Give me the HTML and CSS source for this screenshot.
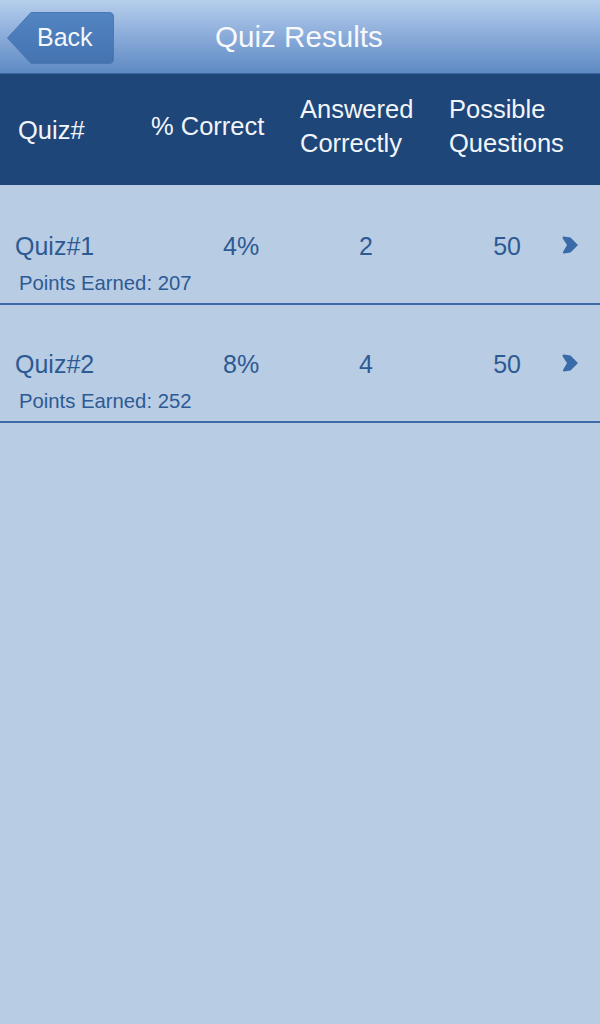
FILE: index.html
```html
<!DOCTYPE html>
<html>
<head>
<meta charset="utf-8">
<link rel="stylesheet" href="styles.css">
</head>
<body>
<div class="app">
  <div class="topbar">
    <div class="back">
      <svg class="back-shape" width="107" height="52" viewBox="0 0 107 52">
        <defs>
          <linearGradient id="bg" x1="0" y1="0" x2="0" y2="1">
            <stop offset="0" stop-color="#5285c2"/>
            <stop offset="1" stop-color="#4473b0"/>
          </linearGradient>
        </defs>
        <path d="M24 0.5 H102 Q106.5 0.5 106.5 5 V47 Q106.5 51.5 102 51.5 H24 L0.5 26 Z" fill="url(#bg)" stroke="#4a78b3" stroke-width="1"/>
      </svg>
      <span class="back-label">Back</span>
    </div>
    <div class="title">Quiz Results</div>
  </div>
  <div class="colhead">
    <div class="h h1">Quiz#</div>
    <div class="h h2">% Correct</div>
    <div class="h h3">Answered<br>Correctly</div>
    <div class="h h4">Possible<br>Questions</div>
  </div>
  <div class="row first">
    <div class="cells">
      <div class="c c1">Quiz#1</div>
      <div class="c c2">4%</div>
      <div class="c c3">2</div>
      <div class="c c4">50</div>
      <svg class="chev" width="17" height="18" viewBox="0 0 17 18"><path d="M0.5 1.5 Q0.5 0.5 2 0.5 L8.5 1.5 L16 9 L8.5 16.5 L2 17.5 Q0.5 17.5 1 16 L5 9 L1 3 Z" fill="#3b6aa8"/></svg>
    </div>
    <div class="pts">Points Earned: 207</div>
  </div>
  <div class="row">
    <div class="cells">
      <div class="c c1">Quiz#2</div>
      <div class="c c2">8%</div>
      <div class="c c3">4</div>
      <div class="c c4">50</div>
      <svg class="chev" width="17" height="18" viewBox="0 0 17 18"><path d="M0.5 1.5 Q0.5 0.5 2 0.5 L8.5 1.5 L16 9 L8.5 16.5 L2 17.5 Q0.5 17.5 1 16 L5 9 L1 3 Z" fill="#3b6aa8"/></svg>
    </div>
    <div class="pts">Points Earned: 252</div>
  </div>
</div>
</body>
</html>
```

FILE: styles.css
```css
html, body {
  margin: 0;
  padding: 0;
}
body {
  background: #b8cce4;
  font-family: "Liberation Sans", Arial, sans-serif;
  width: 600px;
  height: 1024px;
  overflow: hidden;
}
.app {
  display: flex;
  flex-direction: column;
}
.topbar {
  height: 73px;
  background: linear-gradient(to bottom, #b6cfec 0%, #8eaedb 45%, #5d8ac3 100%);
  display: flex;
  align-items: center;
  position: relative;
}
.back {
  position: relative;
  margin-left: 7px;
  margin-top: 2px;
  width: 107px;
  height: 52px;
  display: flex;
  align-items: center;
}
.back-shape {
  position: absolute;
  left: 0;
  top: 0;
}
.back-label {
  position: relative;
  margin-left: 30px;
  color: #f4f7fb;
  font-size: 25px;
}
.title {
  margin-left: 101px;
  color: #f7f9fc;
  font-size: 29.6px;
}
.colhead {
  height: 112px;
  background: #1f4679;
  border-top: 1px solid #3a65a0;
  display: flex;
  align-items: center;
  color: #f2f5fa;
  font-size: 25.5px;
  line-height: 34px;
  box-sizing: border-box;
}
.h1 { margin-left: 18px; width: 133px; }
.h2 { width: 149px; margin-bottom: 8px; }
.h3 { width: 149px; margin-bottom: 8px; }
.h4 { margin-bottom: 8px; }
.row {
  border-bottom: 2px solid #3d69a6;
  color: #2d5a93;
  display: flex;
  flex-direction: column;
  justify-content: flex-end;
  padding-bottom: 9px;
  box-sizing: content-box;
  height: 107px;
}
.row.first {
  margin-top: 2px;
}
.cells {
  display: flex;
  align-items: center;
  font-size: 25px;
  height: 30px;
}
.c1 { margin-left: 15px; width: 208px; }
.c2 { width: 74px; }
.c3 { width: 138px; text-align: center; }
.c4 { width: 86px; text-align: right; }
.chev { margin-left: 41px; margin-top: -2px; }
.pts {
  margin-left: 19px;
  margin-top: 11px;
  font-size: 20.3px;
  line-height: 22px;
}
```
